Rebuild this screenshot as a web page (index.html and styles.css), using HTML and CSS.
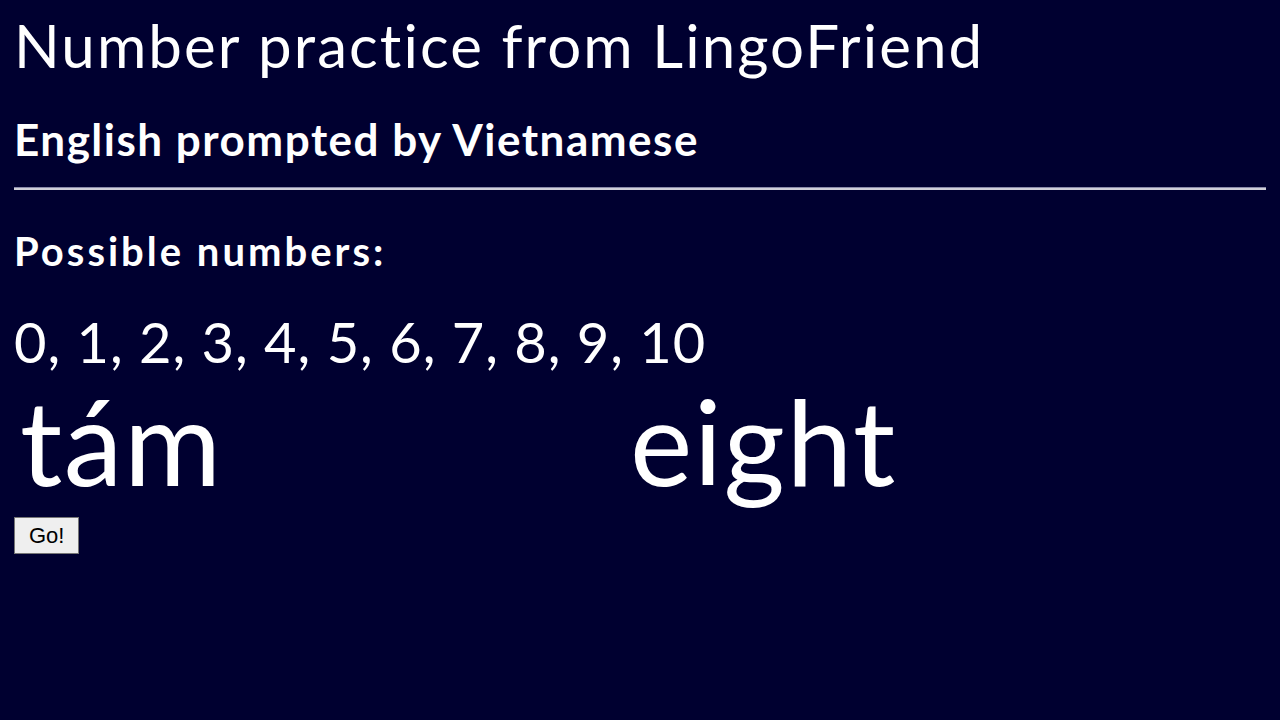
FILE: index.html
```html
<!DOCTYPE html>
<html>
<head>
<meta charset="utf-8">
<link rel="stylesheet" href="styles.css">
</head>
<body>
<h1 class="title">Number practice from LingoFriend</h1>
<h2 class="subtitle">English prompted by Vietnamese</h2>
<hr class="rule">
<h3 class="label">Possible numbers:</h3>
<p class="numbers">0, 1, 2, 3, 4, 5, 6, 7, 8, 9, 10</p>
<div class="pair">
  <div class="word">tám</div>
  <div class="word">eight</div>
</div>
<button class="go">Go!</button>
</body>
</html>
```
FILE: styles.css
```css
html, body {
  background: #000030;
}
body {
  margin: 0;
  padding: 0 14px;
  color: #fff;
  font-family: Lato, "Open Sans", sans-serif;
}
.title {
  margin: 0;
  padding-top: 12px;
  font-size: 60px;
  font-weight: 400;
  line-height: 66px;
  letter-spacing: 2.1px;
}
.subtitle {
  margin: 0;
  padding-top: 35px;
  font-size: 44px;
  font-weight: 700;
  line-height: 52px;
  letter-spacing: 1.5px;
}
.rule {
  margin: 22px 0 0;
  border: 0;
  border-top: 1px solid #8a8aaa;
  border-bottom: 2px solid #cfcfd8;
  height: 0;
}
.label {
  margin: 0;
  padding-top: 37px;
  font-size: 40px;
  font-weight: 700;
  line-height: 48px;
  letter-spacing: 3px;
}
.numbers {
  margin: 0;
  padding-top: 35px;
  font-size: 56px;
  line-height: 64px;
  letter-spacing: 1px;
}
.pair {
  margin-top: 7px;
  display: grid;
  grid-template-columns: 610px 1fr;
}
.word {
  padding-left: 6px;
  font-size: 118px;
  line-height: 120px;
  letter-spacing: 1.5px;
}
.go {
  display: block;
  margin-top: 16px;
  font-family: "Liberation Sans", Arial, sans-serif;
  font-size: 22px;
  line-height: 27px;
  padding: 4px 14px;
  background: #efefef;
  color: #000;
  border: 1px solid #767676;
  border-radius: 0;
}
```
